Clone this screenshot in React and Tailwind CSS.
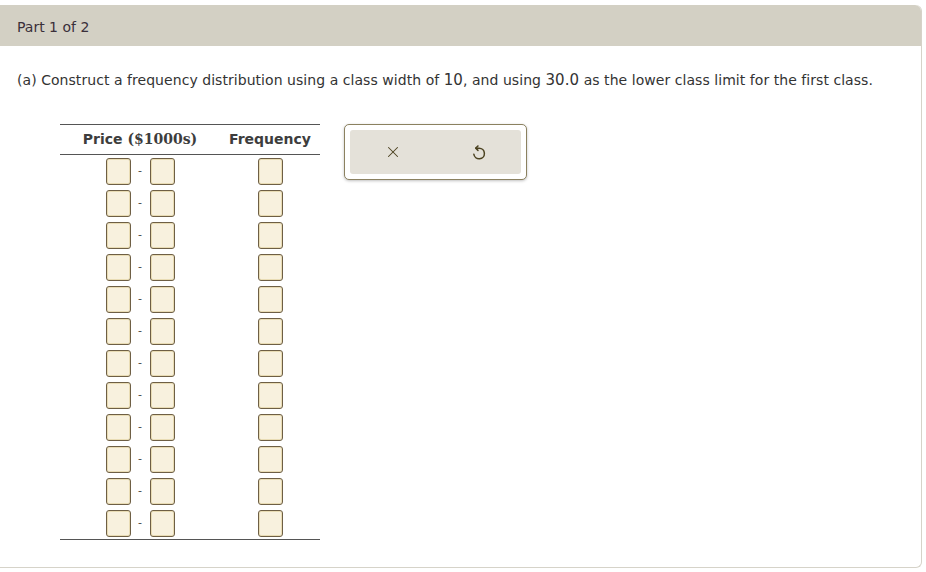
import { X } from 'lucide-react';

const rows = Array.from({ length: 12 }, (_, i) => i);

function Box() {
  return (
    <div className="w-[25px] h-[27px] rounded-[3px] border border-[#6e5f45] bg-[#f8f1de] shadow-[inset_0_0_0_1px_#e9dcb4]" />
  );
}

function UndoIcon() {
  return (
    <svg width="17" height="17" viewBox="0 0 16 16" fill="none" stroke="#4b4220" strokeWidth="1.4" strokeLinecap="round" strokeLinejoin="round">
      <path d="M7.5 1.8 L5.4 3.9 L7.5 6" />
      <path d="M5.6 3.9 H8.5 A5 5 0 1 1 3.6 9.6" />
    </svg>
  );
}

export default function App() {
  return (
    <div className="pt-[5px] pr-[4px] bg-white min-h-[572px] font-['DejaVu_Sans',Verdana,sans-serif] text-[#333]">
      <div className="h-[563px] border-r border-b border-[#d6d3c9] rounded-tr-[6px] rounded-br-[6px]">
        <div className="h-[41px] bg-[#d3d0c4] rounded-tr-[6px] flex items-center pl-[17px] pt-[3px] text-[14px] text-[#3a2f3a]">
          Part 1 of 2
        </div>
        <div className="pl-[17px] pt-[24px] text-[14px] leading-[20px] text-[#333] tracking-[0.05px]">
          (a) Construct a frequency distribution using a class width of{' '}
          <span className="text-[15px]">10</span>, and using{' '}
          <span className="text-[15px]">30.0</span> as the lower class limit for the first class.
        </div>
        <div className="flex items-start pl-[60px] pt-[34px]">
          <div className="w-[260px]">
            <div className="flex h-[31px] border-t border-b border-[#555] items-center text-[14px] font-bold text-[#3d3d3d]">
              <div className="w-[160px] text-center">
                Price <span className="font-['DejaVu_Serif',serif] text-[14px]">($1000s)</span>
              </div>
              <div className="w-[100px] text-center">Frequency</div>
            </div>
            <div className="border-b border-[#555]">
              {rows.map((r) => (
                <div key={r} className="flex h-[32px] items-center">
                  <div className="w-[160px] flex items-center justify-center gap-[6px]">
                    <Box />
                    <span className="text-[11px] text-[#444] w-[7px] text-center">-</span>
                    <Box />
                  </div>
                  <div className="w-[100px] flex justify-center">
                    <Box />
                  </div>
                </div>
              ))}
            </div>
          </div>
          <div className="ml-[24px] w-[183px] h-[56px] rounded-[5px] border border-[#8b8160] bg-white p-[5px] shadow-[0_1px_3px_rgba(0,0,0,0.25)]">
            <div className="h-full bg-[#e4e1d9] rounded-[3px] flex items-center">
              <div className="flex-1 flex justify-center">
                <X size={18} strokeWidth={1.4} color="#4b4220" />
              </div>
              <div className="flex-1 flex justify-center">
                <UndoIcon />
              </div>
            </div>
          </div>
        </div>
      </div>
    </div>
  );
}
